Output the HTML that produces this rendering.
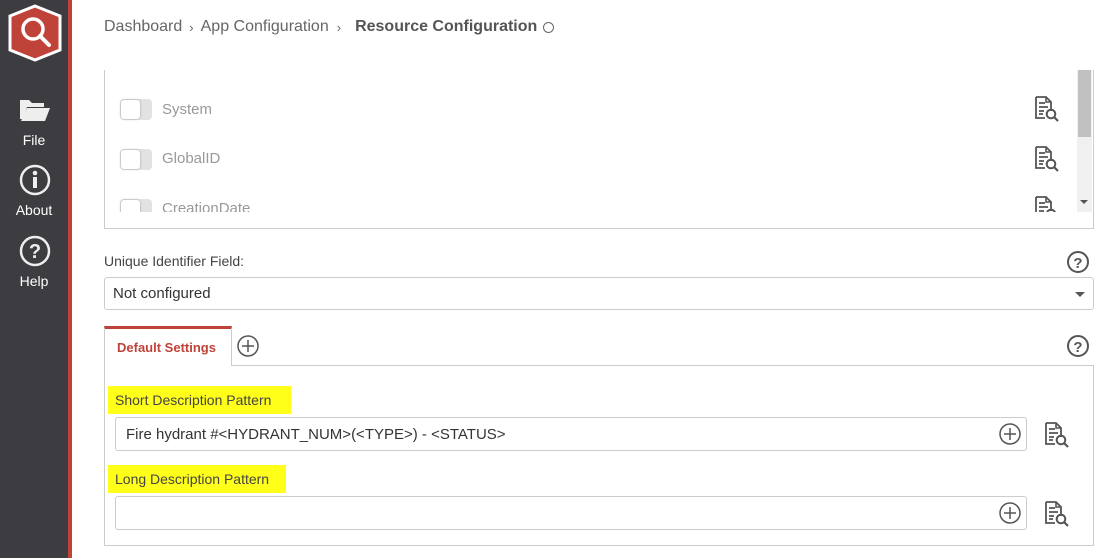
<!DOCTYPE html>
<html><head><meta charset="utf-8"><style>
*{box-sizing:border-box;margin:0;padding:0}
body{width:1104px;height:558px;overflow:hidden;background:#fff;font-family:"Segoe UI","Liberation Sans",sans-serif;position:relative;color:#333}
.side{position:absolute;left:0;top:0;width:68px;height:558px;background:#3c3c41}
.redl{position:absolute;left:68px;top:0;width:4px;height:558px;background:#c0433a}
.nav{position:absolute;left:0;width:68px;text-align:center;color:#fff;font-size:14px}
.abs{position:absolute}
.bc{position:absolute;top:18px;left:104px;font-size:16px;color:#666;white-space:nowrap;display:flex;align-items:center}
.box{position:absolute;border:1px solid #ccc}
.tog{position:absolute;left:120px;width:32px;height:21px;background:#e2e2e2;border-radius:4px}
.tog:after{content:"";position:absolute;left:1px;top:1px;width:19px;height:19px;background:#fff;border-radius:3px;box-shadow:0 0 2px #999}
.tl{position:absolute;left:162px;font-size:15px;color:#999}
.hl{position:absolute;background:#ffff1a;font-size:14px;color:#444;padding:0 7px;line-height:28px;height:28px;white-space:nowrap}
.inp{position:absolute;left:115px;width:912px;height:34px;border:1px solid #ccc;border-radius:3px;font-size:15px;color:#333;padding:8px 10px;white-space:nowrap}
</style></head><body>
<div class="side"></div><div class="redl"></div>
<svg class="abs" style="left:8px;top:4px" width="54" height="58" viewBox="0 0 54 58"><polygon points="27,2 52,12 52,46 27,56 2,46 2,12" fill="#c0433a" stroke="#fff" stroke-width="3"/><circle cx="25" cy="25" r="10" fill="none" stroke="#fff" stroke-width="3.5"/><line x1="32" y1="32" x2="41" y2="41" stroke="#fff" stroke-width="4" stroke-linecap="round"/></svg>
<svg class="abs" style="left:19px;top:97px" width="32" height="26" viewBox="0 0 32 26"><path d="M1 3h9l3 3h12v4H8L4 22H1z" fill="#eee"/><path d="M8 11h23l-5 13H2z" fill="#eee"/></svg>
<div class="nav" style="top:132px">File</div>
<svg class="abs" style="left:19px;top:164px" width="32" height="32"><circle cx="16" cy="16" r="14" fill="none" stroke="#eee" stroke-width="2.5"/><circle cx="16" cy="9" r="2.3" fill="#eee"/><rect x="14" y="13" width="4" height="11" fill="#eee"/></svg>
<div class="nav" style="top:202px">About</div>
<svg class="abs" style="left:19px;top:235px" width="32" height="32"><circle cx="16" cy="16" r="14" fill="none" stroke="#eee" stroke-width="2.5"/><text x="16" y="23" text-anchor="middle" fill="#eee" font-size="20" font-weight="bold" font-family="Liberation Sans">?</text></svg>
<div class="nav" style="top:273px">Help</div>

<div class="bc"><span>Dashboard</span><span style="font-size:13px;margin:0 7px">›</span><span>App Configuration</span><span style="font-size:13px;margin:0 14px 0 8px">›</span><span style="color:#555;font-weight:600">Resource Configuration</span><span style="display:inline-block;margin-left:6px;width:11px;height:11px;border:1.5px solid #666;border-radius:50%"></span></div>

<div class="box" style="left:104px;top:70px;width:990px;height:159px;border-top:none"></div>
<div class="abs" style="left:1077px;top:70px;width:15px;height:142px;background:#f0f0f0"></div>
<div class="abs" style="left:1078px;top:70px;width:13px;height:67px;background:#c1c1c1"></div>
<div class="abs" style="left:1080px;top:200px;border:4px solid transparent;border-top:4px solid #555;border-bottom:0"></div>
<div class="tog" style="top:99px"></div><div class="tl" style="top:101px">System</div>
<div class="tog" style="top:149px"></div><div class="tl" style="top:150px">GlobalID</div>
<div class="tog" style="top:199px"></div><div class="tl" style="top:200px">CreationDate</div>
<div class="abs" style="left:105px;top:212px;width:970px;height:16px;background:#fff"></div>

<svg width="0" height="0" style="position:absolute"><defs><g id="di"><path d="M2 1h10l5 5v9M2 1v21h9" fill="none" stroke="#555" stroke-width="1.8"/><path d="M12 1v5h5" fill="none" stroke="#555" stroke-width="1.6"/><path d="M5 7h6M5 11h9M5 15h5M5 18h4" stroke="#555" stroke-width="1.8"/><circle cx="17" cy="18" r="4.3" fill="none" stroke="#555" stroke-width="2"/><line x1="20" y1="21" x2="24" y2="25" stroke="#555" stroke-width="2.2"/></g></defs></svg>
<svg class="abs" style="left:1034px;top:96px" width="26" height="26"><use href="#di"/></svg>
<svg class="abs" style="left:1034px;top:146px" width="26" height="26"><use href="#di"/></svg>
<svg class="abs" style="left:1034px;top:196px" width="26" height="16"><use href="#di"/></svg>

<div class="abs" style="left:104px;top:253px;font-size:14px;color:#444">Unique Identifier Field:</div>
<svg class="abs" style="left:1066px;top:250px" width="24" height="24"><circle cx="12" cy="12" r="10" fill="none" stroke="#555" stroke-width="2"/><text x="12" y="18" text-anchor="middle" fill="#555" font-size="15" font-weight="bold" font-family="Liberation Sans">?</text></svg>
<div class="box" style="left:104px;top:277px;width:990px;height:33px;border-radius:3px;font-size:15px;color:#333;padding:7px 8px">Not configured</div>
<div class="abs" style="left:1075px;top:292px;border:5px solid transparent;border-top:5px solid #555;border-bottom:0"></div>

<div class="box" style="left:104px;top:365px;width:990px;height:181px"></div>
<div class="abs" style="left:104px;top:326px;width:128px;height:40px;background:#fff;border:1px solid #ccc;border-bottom:none;border-top:3px solid #c0433a;font-size:13px;font-weight:600;color:#c0433a;padding:11px 12px">Default Settings</div>
<svg class="abs" style="left:236px;top:334px" width="24" height="24"><circle cx="12" cy="12" r="10" fill="none" stroke="#555" stroke-width="1.5"/><path d="M12 6v12M6 12h12" stroke="#555" stroke-width="1.5"/></svg>
<svg class="abs" style="left:1066px;top:334px" width="24" height="24"><circle cx="12" cy="12" r="10" fill="none" stroke="#555" stroke-width="2"/><text x="12" y="18" text-anchor="middle" fill="#555" font-size="15" font-weight="bold" font-family="Liberation Sans">?</text></svg>

<div class="hl" style="left:108px;top:386px;width:183px">Short Description Pattern</div>
<div class="inp" style="top:417px">Fire hydrant #&lt;HYDRANT_NUM&gt;(&lt;TYPE&gt;) - &lt;STATUS&gt;</div>
<svg class="abs" style="left:998px;top:422px" width="24" height="24"><circle cx="12" cy="12" r="10" fill="none" stroke="#555" stroke-width="1.5"/><path d="M12 6v12M6 12h12" stroke="#555" stroke-width="1.5"/></svg>
<svg class="abs" style="left:1044px;top:422px" width="26" height="26"><use href="#di"/></svg>

<div class="hl" style="left:108px;top:465px;width:178px">Long Description Pattern</div>
<div class="inp" style="top:496px"></div>
<svg class="abs" style="left:998px;top:501px" width="24" height="24"><circle cx="12" cy="12" r="10" fill="none" stroke="#555" stroke-width="1.5"/><path d="M12 6v12M6 12h12" stroke="#555" stroke-width="1.5"/></svg>
<svg class="abs" style="left:1044px;top:501px" width="26" height="26"><use href="#di"/></svg>
</body></html>
